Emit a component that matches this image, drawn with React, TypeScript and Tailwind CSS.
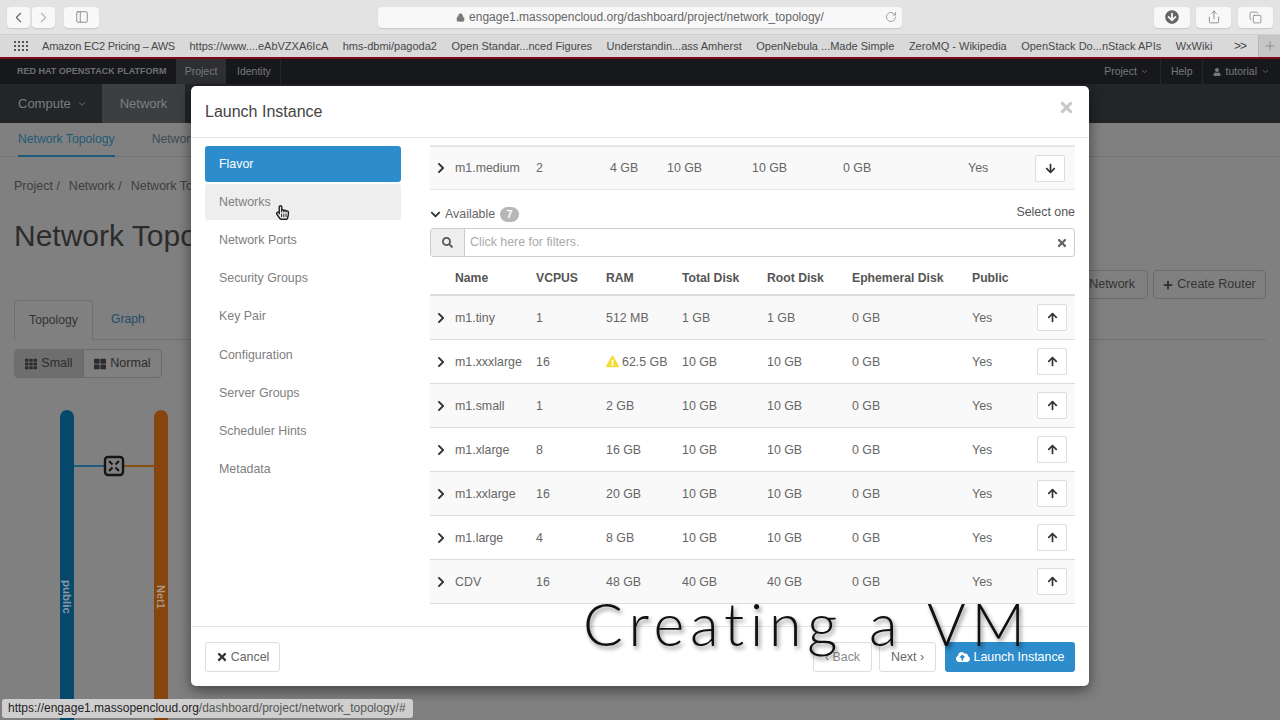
import {
  FaArrowCircleDown,
  FaArrowDown,
  FaArrowUp,
  FaChevronDown,
  FaChevronRight,
  FaCloudUploadAlt,
  FaExclamationTriangle,
  FaPlus,
  FaRegHandPointer,
  FaSearch,
  FaTh,
  FaThLarge,
  FaTimes,
  FaUser,
} from 'react-icons/fa';
import { ChevronDown, ChevronLeft, ChevronRight, Copy, Lock, PanelLeft, Plus, RotateCw, Share } from 'lucide-react';

const bookmarks = [
  'Amazon EC2 Pricing – AWS',
  'https://www....eAbVZXA6IcA',
  'hms-dbmi/pagoda2',
  'Open Standar...nced Figures',
  'Understandin...ass Amherst',
  'OpenNebula ...Made Simple',
  'ZeroMQ - Wikipedia',
  'OpenStack Do...nStack APIs',
  'WxWiki',
];

const steps = [
  'Flavor',
  'Networks',
  'Network Ports',
  'Security Groups',
  'Key Pair',
  'Configuration',
  'Server Groups',
  'Scheduler Hints',
  'Metadata',
];

const flavors = [
  ['m1.tiny', '1', '512 MB', '1 GB', '1 GB', '0 GB'],
  ['m1.xxxlarge', '16', '62.5 GB', '10 GB', '10 GB', '0 GB'],
  ['m1.small', '1', '2 GB', '10 GB', '10 GB', '0 GB'],
  ['m1.xlarge', '8', '16 GB', '10 GB', '10 GB', '0 GB'],
  ['m1.xxlarge', '16', '20 GB', '10 GB', '10 GB', '0 GB'],
  ['m1.large', '4', '8 GB', '10 GB', '10 GB', '0 GB'],
  ['CDV', '16', '48 GB', '40 GB', '40 GB', '0 GB'],
];

const headers = ['Name', 'VCPUS', 'RAM', 'Total Disk', 'Root Disk', 'Ephemeral Disk', 'Public'];

const columns = 'grid grid-cols-[25px_81px_70px_76px_85px_85px_120px_65px_38px] items-center';

function SafariButton({ className, children }: { className: string; children: React.ReactNode }) {
  return (
    <div className={`h-[21px] flex items-center justify-center rounded-[4px] bg-[#f8f8f8] shadow-[0_1px_1px_rgba(0,0,0,0.12)] text-[#666] ${className}`}>
      {children}
    </div>
  );
}

function BrowserChrome() {
  return (
    <div className="shrink-0">
      <div className="h-[34px] flex items-center pl-[7px] bg-[#e3e3e3]">
        <SafariButton className="w-[23px]"><ChevronLeft size={17} strokeWidth={1.5} /></SafariButton>
        <SafariButton className="w-[23px] ml-[2px] text-[#b5b5b5]"><ChevronRight size={17} strokeWidth={1.5} /></SafariButton>
        <SafariButton className="w-[35px] ml-[9px]"><PanelLeft size={14} strokeWidth={1.2} /></SafariButton>
        <SafariButton className="w-[524px] ml-[279px] relative text-[12px] text-[#4a4a4a] gap-[4px]">
          <Lock size={9} className="text-[#777]" fill="#777" />
          <span>engage1.massopencloud.org/dashboard/project/network_topology/</span>
          <RotateCw size={12} strokeWidth={1.3} className="absolute right-[5px] top-[4px] text-[#777]" />
        </SafariButton>
        <SafariButton className="w-[36px] ml-[252px] text-[#555]"><FaArrowCircleDown size={14} /></SafariButton>
        <SafariButton className="w-[35px] ml-[6px]"><Share size={14} strokeWidth={1.2} /></SafariButton>
        <SafariButton className="w-[35px] ml-[7px]"><Copy size={13} strokeWidth={1.2} /></SafariButton>
      </div>
      <div className="h-[23px] flex items-center bg-[#d9d9d9] border-t border-[#cfcfcf] text-[11px] text-[#484848]">
        <div className="w-[42px] pl-[14px]">
          <div className="grid grid-cols-4 gap-[2px] w-[14px]">
            {Array.from({ length: 12 }).map((_, i) => (
              <span key={i} className="w-[2px] h-[2px] bg-[#555]" />
            ))}
          </div>
        </div>
        <div className="flex gap-[14.5px] whitespace-nowrap">
          {bookmarks.map((item, i) => (
            <span key={item} className={i === 0 ? 'tracking-[-0.2px]' : ''}>{item}</span>
          ))}
        </div>
        <span className="ml-auto mr-[12px] text-[12px] tracking-[-1px]">&gt;&gt;</span>
        <span className="w-[22px] h-full flex items-center justify-center bg-[#c6c6c6] border-l border-[#b8b8b8] text-[#777]">
          <Plus size={14} strokeWidth={1.2} />
        </span>
      </div>
      <div className="h-[2px] bg-[#7b0a12]" />
    </div>
  );
}

function PageBehind() {
  return (
    <div className="flex-1 min-h-0 flex flex-col bg-[#808080]">
      <div className="h-[25px] shrink-0 flex items-center bg-[#17181c] text-[10.5px] text-[#77797d]">
        <span className="w-[176px] pl-[17px] text-[9px] font-bold text-[#6f7074] whitespace-nowrap">RED HAT OPENSTACK PLATFORM</span>
        <span className="h-full w-[50px] flex items-center justify-center bg-[#2e2f33]">Project</span>
        <span className="h-full w-[55px] pl-[11px] flex items-center border-r border-[#26272b]">Identity</span>
        <div className="ml-auto h-full flex items-center">
          <span className="h-full pl-[25px] pr-[11px] flex items-center gap-[3px] border-r border-[#26272b]">
            Project <ChevronDown size={9} />
          </span>
          <span className="h-full px-[10px] flex items-center border-r border-[#26272b]">Help</span>
          <span className="h-full pl-[10px] pr-[10px] flex items-center gap-[4px]">
            <FaUser size={8} /> tutorial <ChevronDown size={9} />
          </span>
        </div>
      </div>
      <div className="h-[39px] shrink-0 flex items-center bg-[#232529] text-[13px] text-[#7c7e82]">
        <span className="w-[102px] pl-[18px] flex items-center gap-[6px]">
          Compute <ChevronDown size={10} />
        </span>
        <span className="h-full w-[83px] flex items-center justify-center bg-[#3c3e42]">Network</span>
      </div>
      <div className="h-[34px] shrink-0 flex gap-[37px] pl-[18px] pt-[7px] border-b border-[#747474] text-[12.2px] text-[#3d4c55]">
        <span className="text-[#1f5a78] h-[27px] border-b-2 border-[#1f5a78]">Network Topology</span>
        <span>Networks</span>
      </div>
      <div className="shrink-0 h-[42px] pl-[14px] pt-[20px] flex gap-[9px] text-[12.5px] leading-[18px] text-[#3e3e3e] whitespace-nowrap">
        <span>Project /</span>
        <span>Network /</span>
        <span>Network Topology</span>
      </div>
      <h1 className="pl-[14px] pt-[19px] shrink-0 text-[30px] leading-[36px] text-[#2c2c2c] whitespace-nowrap">Network Topology</h1>
      <div className="shrink-0 flex justify-end gap-[5px] pr-[14px] mt-[16px] text-[12.5px] text-[#333]">
        <button className="h-[29px] px-[12px] flex items-center gap-[4px] rounded-[4px] border border-[#6b6b6b]">
          <FaPlus size={10} /> Create Network
        </button>
        <button className="h-[29px] w-[113px] flex items-center justify-center gap-[4px] rounded-[4px] border border-[#6b6b6b]">
          <FaPlus size={10} /> Create Router
        </button>
      </div>
      <div className="shrink-0 mt-[1px] mx-[14px] h-[40px] flex text-[12.2px] border-b border-[#707070]">
        <span className="w-[79px] h-[40px] flex items-center justify-center rounded-t-[4px] border border-b-[#808080] border-[#707070] text-[#333]">
          Topology
        </span>
        <span className="ml-[18px] h-full flex items-center text-[#1f4d68]">Graph</span>
      </div>
      <div className="shrink-0 ml-[14px] mt-[9px] h-[29px] w-[148px] flex text-[12.5px] text-[#2c2c2c] rounded-[4px] border border-[#6b6b6b]">
        <span className="w-[69px] flex items-center justify-center gap-[4px] bg-[#6e6e6e] rounded-l-[4px] border-r border-[#666]">
          <FaTh size={12} /> Small
        </span>
        <span className="flex-1 flex items-center justify-center gap-[4px]">
          <FaThLarge size={12} /> Normal
        </span>
      </div>
      <svg className="shrink-0 ml-[60px] mt-[32px]" width="110" height="310" viewBox="0 0 110 310" fill="none">
        <path d="M7 7V310" stroke="#07496c" strokeWidth="14" strokeLinecap="round" />
        <path d="M101 7V310" stroke="#87440c" strokeWidth="14" strokeLinecap="round" />
        <path d="M14 56H44" stroke="#1f5d80" strokeWidth="2" />
        <path d="M64 56H94" stroke="#87500f" strokeWidth="2" />
        <rect x="45" y="47" width="18" height="18" rx="3" fill="#808080" stroke="#141414" strokeWidth="2.4" />
        <path d="M49 51l3.5 3.5M59 51l-3.5 3.5M49 61l3.5-3.5M59 61l-3.5-3.5" stroke="#141414" strokeWidth="2" />
        <text x="0" y="0" transform="translate(3 170) rotate(90)" fontSize="11.5" fontWeight="700" fill="#8d9aa3">public</text>
        <text x="0" y="0" transform="translate(97 175) rotate(90)" fontSize="11" fontWeight="700" fill="#a89582">Net1</text>
      </svg>
    </div>
  );
}

function RowButton({ down }: { down?: boolean }) {
  return (
    <button className="w-[30px] h-[27px] flex items-center justify-center rounded-[2px] bg-white border border-[#ddd] text-[#333]">
      {down ? <FaArrowDown size={11} /> : <FaArrowUp size={11} />}
    </button>
  );
}

function FlavorTable() {
  return (
    <div className="w-[645px] ml-[29px] pt-[7px] text-[12.4px] text-[#666]">
      <div className="h-[45px] grid grid-cols-[25px_81px_74px_57px_85px_91px_125px_67px_30px] items-center bg-[#f9f9f9] border-t-2 border-b border-[#e6e6e6] [&>span]:pt-[1px]">
        <FaChevronRight size={12} className="ml-[5px] text-[#333]" />
        <span>m1.medium</span>
        <span>2</span>
        <span>4 GB</span>
        <span>10 GB</span>
        <span>10 GB</span>
        <span>0 GB</span>
        <span>Yes</span>
        <RowButton down />
      </div>
      <div className="h-[38px] flex items-start justify-between pt-[15px]">
        <span className="flex items-center gap-[4px] leading-[18px]">
          <FaChevronDown size={11} className="text-[#333]" /> Available
          <span className="ml-[1px] w-[19px] h-[15px] rounded-full bg-[#b7b7b7] text-white text-[11px] font-bold leading-[15px] text-center">7</span>
        </span>
        <span className="leading-[15px] text-[#555]">Select one</span>
      </div>
      <div className="h-[29px] flex rounded-[3px] border border-[#ccc]">
        <span className="w-[34px] flex items-center justify-center bg-[#eee] border-r border-[#ccc] text-[#555]">
          <FaSearch size={11} />
        </span>
        <span className="flex-1 pl-[5px] leading-[27px] text-[#aaa]">Click here for filters.</span>
        <span className="w-[24px] flex items-center justify-center text-[#666]"><FaTimes size={12} /></span>
      </div>
      <div className={`h-[39px] pt-[6px] border-b-2 border-[#ddd] text-[12.2px] font-bold text-[#555] ${columns}`}>
        <span />
        {headers.map((title) => (
          <span key={title}>{title}</span>
        ))}
        <span />
      </div>
      {flavors.map((row, i) => (
        <div key={row[0]} className={`h-[44px] border-b border-[#ddd] [&>span]:pt-[1px] ${i % 2 === 0 ? 'bg-[#f9f9f9]' : 'bg-white'} ${columns}`}>
          <FaChevronRight size={12} className="ml-[5px] text-[#333]" />
          <span>{row[0]}</span>
          <span>{row[1]}</span>
          <span className="flex items-center gap-[3px] whitespace-nowrap">
            {row[2] === '62.5 GB' && <FaExclamationTriangle size={13} className="text-[#f5dc3c]" />}
            {row[2]}
          </span>
          <span>{row[3]}</span>
          <span>{row[4]}</span>
          <span>{row[5]}</span>
          <span>Yes</span>
          <RowButton />
        </div>
      ))}
    </div>
  );
}

function LaunchModal() {
  return (
    <div className="absolute left-[191px] top-[86px] w-[898px] h-[600px] flex flex-col rounded-[5px] bg-white shadow-[0_4px_14px_rgba(0,0,0,0.5)]">
      <div className="h-[52px] shrink-0 flex items-center justify-between pl-[14px] pr-[14px] border-b border-[#e5e5e5]">
        <h2 className="text-[16px] text-[#444]">Launch Instance</h2>
        <FaTimes size={17} className="-mt-[8px] text-[#c9c9c9]" />
      </div>
      <div className="flex-1 min-h-0 flex pl-[14px]">
        <ul className="w-[196px] shrink-0 pt-[8px] text-[12.4px] text-[#808080]">
          {steps.map((step, i) => (
            <li
              key={step}
              className={`h-[36px] mb-[2.2px] pl-[14px] flex items-center rounded-[3px] ${i === 0 ? 'bg-[#2d8ccb] text-white' : ''} ${i === 1 ? 'bg-[#eeeeee]' : ''}`}
            >
              {step}
            </li>
          ))}
        </ul>
        <FlavorTable />
      </div>
      <div className="h-[60px] shrink-0 flex items-center px-[14px] border-t border-[#e5e5e5] text-[12.4px] text-[#666] [&>button]:pt-[1px]">
        <button className="w-[75px] h-[30px] flex items-center justify-center gap-[3px] rounded-[3px] border border-[#ddd]">
          <FaTimes size={12} className="text-[#333]" /> Cancel
        </button>
        <button className="ml-auto w-[59px] h-[30px] flex items-center justify-center rounded-[3px] border border-[#ddd] text-[#888]">
          ‹ Back
        </button>
        <button className="ml-[7px] w-[57px] h-[30px] flex items-center justify-center rounded-[3px] border border-[#ddd]">
          Next ›
        </button>
        <button className="ml-[9px] w-[130px] h-[30px] flex items-center justify-center gap-[4px] rounded-[3px] bg-[#2d8ccb] text-white">
          <FaCloudUploadAlt size={14} /> Launch Instance
        </button>
      </div>
    </div>
  );
}

export default function App() {
  return (
    <div className="relative w-[1280px] h-[720px] flex flex-col overflow-hidden font-['Liberation_Sans',Arial,sans-serif]">
      <BrowserChrome />
      <PageBehind />
      <LaunchModal />
      <div className="absolute left-[583px] top-[586px] font-['Lato',sans-serif] font-light text-[59px] leading-[76px] tracking-[5.8px] [word-spacing:4px] text-[#111] whitespace-nowrap [text-shadow:2px_3px_4px_rgba(0,0,0,0.45)]">
        Creating a VM
      </div>
      <FaRegHandPointer size={15} className="absolute left-[275px] top-[205px] text-[#222]" />
      <div className="absolute left-[2px] top-[699px] h-[19px] w-[411px] pl-[6px] rounded-[3px] bg-[#cfcfcf] text-[12px] leading-[19px] text-[#555] whitespace-nowrap">
        <span className="text-[#222]">https://engage1.massopencloud.org</span>/dashboard/project/network_topology/#
      </div>
    </div>
  );
}
